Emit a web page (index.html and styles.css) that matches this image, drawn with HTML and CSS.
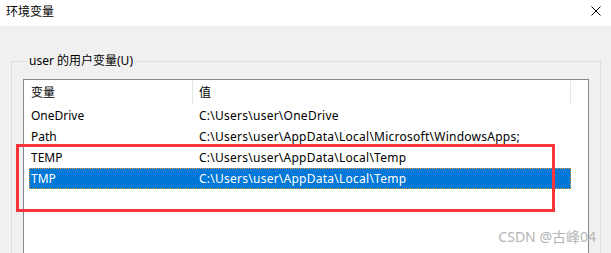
FILE: index.html
```html
<!DOCTYPE html>
<html lang="zh-CN">
<head>
  <meta charset="UTF-8">
  <title>环境变量</title>
  <link rel="stylesheet" href="styles.css">
</head>
<body>
  <div class="titlebar">
    <span class="title">环境变量</span>
    <svg class="close" width="10" height="10" viewBox="0 0 10 10">
      <path d="M0.5 0.5 L9.5 9.5 M9.5 0.5 L0.5 9.5" stroke="#000" stroke-width="1" fill="none"/>
    </svg>
  </div>

  <fieldset class="group">
    <legend>user 的用户变量(U)</legend>
    <div class="listbox">
      <div class="row head">
        <div class="cell name">变量</div>
        <div class="cell value">值</div>
      </div>
      <div class="row">
        <div class="cell name">OneDrive</div>
        <div class="cell value">C:\Users\user\OneDrive</div>
      </div>
      <div class="row">
        <div class="cell name">Path</div>
        <div class="cell value">C:\Users\user\AppData\Local\Microsoft\WindowsApps;</div>
      </div>
      <div class="row">
        <div class="cell name">TEMP</div>
        <div class="cell value">C:\Users\user\AppData\Local\Temp</div>
      </div>
      <div class="row selected">
        <div class="cell name">TMP</div>
        <div class="cell value">C:\Users\user\AppData\Local\Temp</div>
      </div>
    </div>
  </fieldset>

  <div class="highlight"></div>
  <div class="watermark">CSDN @古峰04</div>
</body>
</html>
```

FILE: styles.css
```css
html, body {
  margin: 0;
  padding: 0;
  height: 100%;
  overflow: hidden;
}
body {
  position: relative;
  background-color: #f0f0f0;
  color: #000;
  font-family: "Noto Sans", "Noto Sans CJK SC", sans-serif;
  font-size: 12px;
}
.titlebar {
  height: 26px;
  background-color: #fff;
  display: flex;
  align-items: center;
  justify-content: space-between;
  padding: 0 10px 0 6px;
}
.title {
  line-height: 16px;
  margin-top: -2px;
}
.close {
  display: block;
  margin-top: -4px;
}
.group {
  margin: 27px 10px 0 11px;
  padding: 10px 11px 0 11px;
  border: 1px solid #dcdcdc;
  height: 200px;
  min-width: 0;
}
.group legend {
  padding: 0 2px;
  margin-left: 4px;
  line-height: 16px;
  height: 16px;
}
.listbox {
  border: 1px solid #828790;
  background-color: #fff;
  height: 190px;
  padding-left: 5px;
}
.row {
  display: grid;
  grid-template-columns: 164px 378px;
  width: 542px;
  height: 21px;
  line-height: 21px;
  box-sizing: border-box;
  white-space: nowrap;
}
.row.head {
  height: 25px;
  line-height: 24px;
}
.head .cell {
  margin-top: 1px;
  border-right: 1px solid #e5e5e5;
}
.cell.name {
  padding-left: 2px;
}
.cell.value {
  padding-left: 6px;
  letter-spacing: 0.25px;
}
.row.selected {
  background-color: #0078d7;
  color: #fff;
  border: 1px dotted #e89a3c;
  line-height: 19px;
}
.selected .cell.name {
  padding-left: 1px;
}
.selected .cell.value {
  padding-left: 5px;
}
.highlight {
  position: absolute;
  left: 16px;
  top: 144px;
  width: 533px;
  height: 62px;
  border: 3px solid #f5373c;
}
.watermark {
  position: absolute;
  right: 15px;
  top: 228px;
  color: #b4b4b4;
  font-size: 14px;
  line-height: 18px;
}
```
